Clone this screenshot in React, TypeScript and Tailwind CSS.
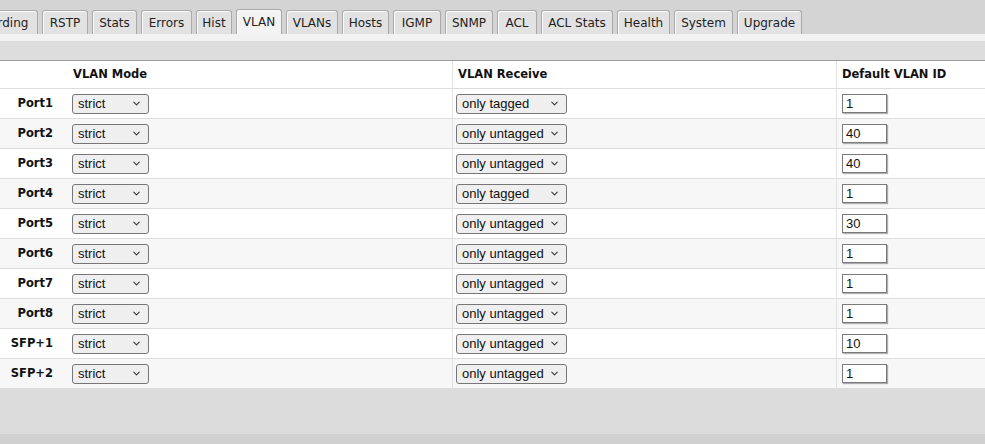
import { ChevronDown } from "lucide-react";

const tabs = [
  { label: "Forwarding", w: "w-[86px] -ml-[48px]" },
  { label: "RSTP", w: "w-[46px]" },
  { label: "Stats", w: "w-[45px]" },
  { label: "Errors", w: "w-[51px]" },
  { label: "Hist", w: "w-[36px]" },
  { label: "VLAN", w: "w-[46px]", active: true },
  { label: "VLANs", w: "w-[52px]" },
  { label: "Hosts", w: "w-[47px]" },
  { label: "IGMP", w: "w-[48px]" },
  { label: "SNMP", w: "w-[48px]" },
  { label: "ACL", w: "w-[40px]" },
  { label: "ACL Stats", w: "w-[72px]" },
  { label: "Health", w: "w-[53px]" },
  { label: "System", w: "w-[59px]" },
  { label: "Upgrade", w: "w-[65px]" },
];

const ports = [
  { name: "Port1", receive: "only tagged", id: "1" },
  { name: "Port2", receive: "only untagged", id: "40" },
  { name: "Port3", receive: "only untagged", id: "40" },
  { name: "Port4", receive: "only tagged", id: "1" },
  { name: "Port5", receive: "only untagged", id: "30" },
  { name: "Port6", receive: "only untagged", id: "1" },
  { name: "Port7", receive: "only untagged", id: "1" },
  { name: "Port8", receive: "only untagged", id: "1" },
  { name: "SFP+1", receive: "only untagged", id: "10" },
  { name: "SFP+2", receive: "only untagged", id: "1" },
];

function Select({ value, width }: { value: string; width: string }) {
  return (
    <div
      className={`${width} flex h-[20px] items-center justify-between rounded-[3px] border border-[#767676] bg-[#efefef] pl-[5px] pr-[6px] font-['Liberation_Sans',Arial,sans-serif] text-[13px] text-[#111]`}>
      <span>{value}</span>
      <ChevronDown size={11} strokeWidth={2.2} className="text-[#333]" />
    </div>
  );
}

export default function App() {
  return (
    <div className="flex h-[444px] w-[985px] flex-col overflow-hidden bg-[#d4d4d4] font-['DejaVu_Sans',Verdana,sans-serif] text-[11.5px] text-[#111]">
      <div className="flex h-[34px] items-end gap-[4px]">
        {tabs.map((t) => (
          <div
            key={t.label}
            className={`${t.w} flex shrink-0 items-center justify-center rounded-t-[3px] border border-b-0 border-[#a9a9a9] shadow-[inset_1px_1px_0_#fbfbfb] text-[12px] text-[#222] ${
              t.active ? "h-[25px] bg-[#f3f3f3]" : "h-[24px] bg-[#e2e2e2]"
            }`}>
            {t.label}
          </div>
        ))}
      </div>
      <div className="h-[7px] bg-[#f2f2f2]" />
      <div className="h-[20px] border-b border-[#9c9c9c] bg-[#dddddd]" />

      <div className="w-[1220px]">
        <div className="grid h-[28px] grid-cols-[68px_384px_384px_384px] border-b border-[#dddddd] bg-white font-bold">
          <div />
          <div className="flex items-center pl-[5px]">VLAN Mode</div>
          <div className="flex items-center border-l border-[#e2e2e2] pl-[5px]">VLAN Receive</div>
          <div className="flex items-center border-l border-[#e2e2e2] pl-[5px]">Default VLAN ID</div>
        </div>
        {ports.map((p, i) => (
          <div
            key={p.name}
            className={`grid h-[30px] grid-cols-[68px_384px_384px_384px] border-b border-[#dcdcdc] ${
              i % 2 === 0 ? "bg-white" : "bg-[#f7f7f7]"
            }`}>
            <div className="flex items-center justify-end pr-[15px] font-bold">{p.name}</div>
            <div className="flex items-center pl-[4px]">
              <Select value="strict" width="w-[77px]" />
            </div>
            <div className="flex items-center border-l border-[#e2e2e2] pl-[3px]">
              <Select value={p.receive} width="w-[111px]" />
            </div>
            <div className="flex items-center border-l border-[#e2e2e2] pl-[5px]">
              <input
                readOnly
                value={p.id}
                className="h-[19px] w-[45px] border border-[#7a7a7a] bg-white pl-[3px] font-['Liberation_Sans',Arial,sans-serif] text-[13px] text-[#111] shadow-[1px_1px_1px_rgba(0,0,0,0.3)] outline-none"
              />
            </div>
          </div>
        ))}
      </div>

      <div className="h-[45px] shrink-0 bg-[#dcdcdc]" />
      <div className="flex-1 bg-[#d0d0d0]" />
    </div>
  );
}
